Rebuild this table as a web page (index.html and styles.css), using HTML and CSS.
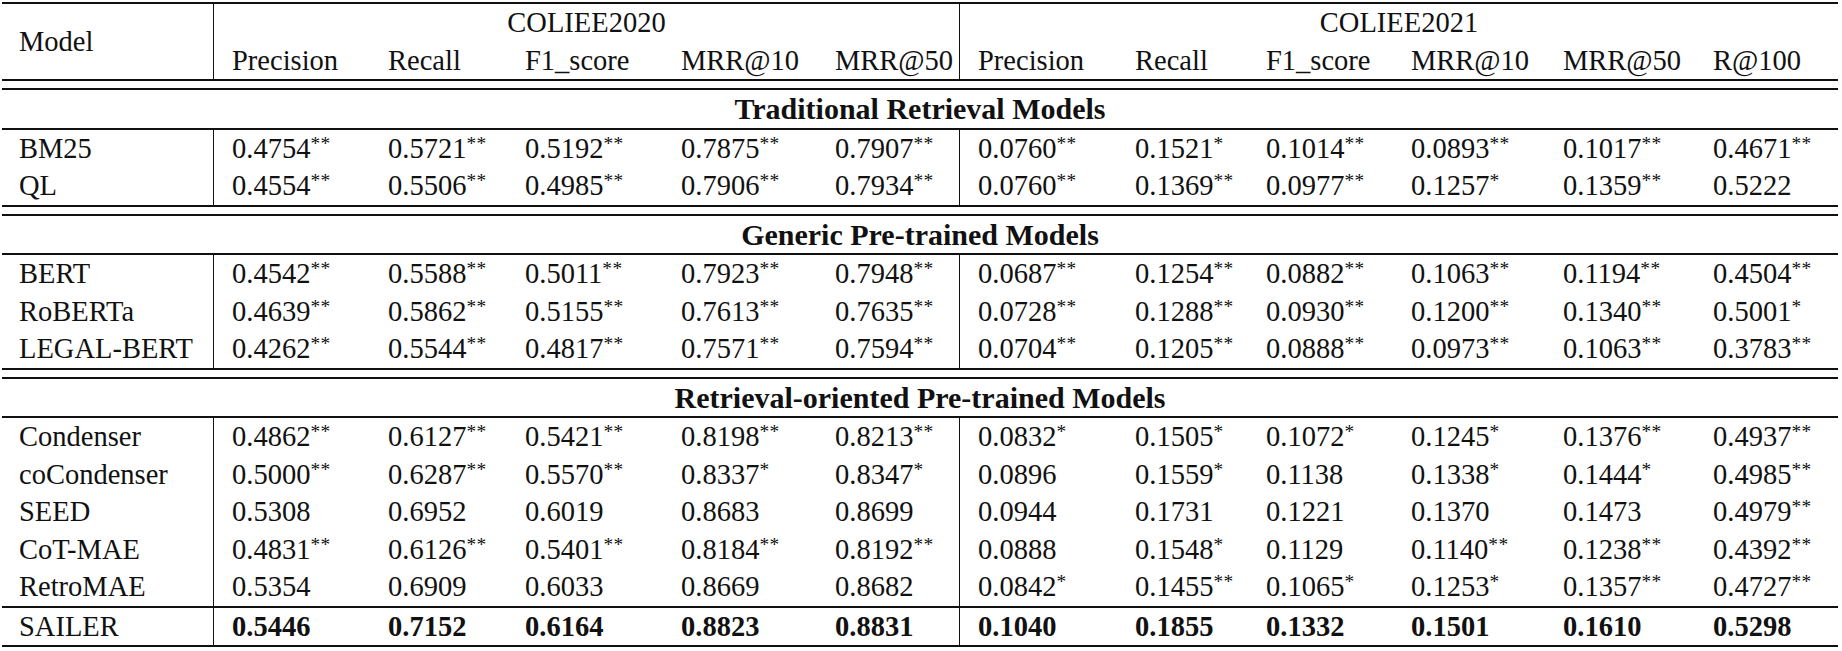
FILE: index.html
```html
<!DOCTYPE html>
<html>
<head>
<meta charset="utf-8">
<link rel="stylesheet" href="styles.css">
</head>
<body>
<div class="tbl">
  <div class="grid head">
    <div class="model span2">Model</div>
    <div class="grp g20">COLIEE2020</div>
    <div class="grp g21">COLIEE2021</div>
    <div class="h">Precision</div>
    <div class="h">Recall</div>
    <div class="h">F1_score</div>
    <div class="h">MRR@10</div>
    <div class="h">MRR@50</div>
    <div class="h v">Precision</div>
    <div class="h">Recall</div>
    <div class="h">F1_score</div>
    <div class="h">MRR@10</div>
    <div class="h">MRR@50</div>
    <div class="h">R@100</div>
  </div>

  <div class="sec first">Traditional Retrieval Models</div>
  <div class="grid body end">
    <div class="model">BM25</div><div>0.4754<sup>**</sup></div><div>0.5721<sup>**</sup></div><div>0.5192<sup>**</sup></div><div>0.7875<sup>**</sup></div><div>0.7907<sup>**</sup></div><div class="v">0.0760<sup>**</sup></div><div>0.1521<sup>*</sup></div><div>0.1014<sup>**</sup></div><div>0.0893<sup>**</sup></div><div>0.1017<sup>**</sup></div><div>0.4671<sup>**</sup></div>
    <div class="model">QL</div><div>0.4554<sup>**</sup></div><div>0.5506<sup>**</sup></div><div>0.4985<sup>**</sup></div><div>0.7906<sup>**</sup></div><div>0.7934<sup>**</sup></div><div class="v">0.0760<sup>**</sup></div><div>0.1369<sup>**</sup></div><div>0.0977<sup>**</sup></div><div>0.1257<sup>*</sup></div><div>0.1359<sup>**</sup></div><div>0.5222</div>
  </div>

  <div class="sec">Generic Pre-trained Models</div>
  <div class="grid body end">
    <div class="model">BERT</div><div>0.4542<sup>**</sup></div><div>0.5588<sup>**</sup></div><div>0.5011<sup>**</sup></div><div>0.7923<sup>**</sup></div><div>0.7948<sup>**</sup></div><div class="v">0.0687<sup>**</sup></div><div>0.1254<sup>**</sup></div><div>0.0882<sup>**</sup></div><div>0.1063<sup>**</sup></div><div>0.1194<sup>**</sup></div><div>0.4504<sup>**</sup></div>
    <div class="model">RoBERTa</div><div>0.4639<sup>**</sup></div><div>0.5862<sup>**</sup></div><div>0.5155<sup>**</sup></div><div>0.7613<sup>**</sup></div><div>0.7635<sup>**</sup></div><div class="v">0.0728<sup>**</sup></div><div>0.1288<sup>**</sup></div><div>0.0930<sup>**</sup></div><div>0.1200<sup>**</sup></div><div>0.1340<sup>**</sup></div><div>0.5001<sup>*</sup></div>
    <div class="model">LEGAL-BERT</div><div>0.4262<sup>**</sup></div><div>0.5544<sup>**</sup></div><div>0.4817<sup>**</sup></div><div>0.7571<sup>**</sup></div><div>0.7594<sup>**</sup></div><div class="v">0.0704<sup>**</sup></div><div>0.1205<sup>**</sup></div><div>0.0888<sup>**</sup></div><div>0.0973<sup>**</sup></div><div>0.1063<sup>**</sup></div><div>0.3783<sup>**</sup></div>
  </div>

  <div class="sec">Retrieval-oriented Pre-trained Models</div>
  <div class="grid body">
    <div class="model">Condenser</div><div>0.4862<sup>**</sup></div><div>0.6127<sup>**</sup></div><div>0.5421<sup>**</sup></div><div>0.8198<sup>**</sup></div><div>0.8213<sup>**</sup></div><div class="v">0.0832<sup>*</sup></div><div>0.1505<sup>*</sup></div><div>0.1072<sup>*</sup></div><div>0.1245<sup>*</sup></div><div>0.1376<sup>**</sup></div><div>0.4937<sup>**</sup></div>
    <div class="model">coCondenser</div><div>0.5000<sup>**</sup></div><div>0.6287<sup>**</sup></div><div>0.5570<sup>**</sup></div><div>0.8337<sup>*</sup></div><div>0.8347<sup>*</sup></div><div class="v">0.0896</div><div>0.1559<sup>*</sup></div><div>0.1138</div><div>0.1338<sup>*</sup></div><div>0.1444<sup>*</sup></div><div>0.4985<sup>**</sup></div>
    <div class="model">SEED</div><div>0.5308</div><div>0.6952</div><div>0.6019</div><div>0.8683</div><div>0.8699</div><div class="v">0.0944</div><div>0.1731</div><div>0.1221</div><div>0.1370</div><div>0.1473</div><div>0.4979<sup>**</sup></div>
    <div class="model">CoT-MAE</div><div>0.4831<sup>**</sup></div><div>0.6126<sup>**</sup></div><div>0.5401<sup>**</sup></div><div>0.8184<sup>**</sup></div><div>0.8192<sup>**</sup></div><div class="v">0.0888</div><div>0.1548<sup>*</sup></div><div>0.1129</div><div>0.1140<sup>**</sup></div><div>0.1238<sup>**</sup></div><div>0.4392<sup>**</sup></div>
    <div class="model">RetroMAE</div><div>0.5354</div><div>0.6909</div><div>0.6033</div><div>0.8669</div><div>0.8682</div><div class="v">0.0842<sup>*</sup></div><div>0.1455<sup>**</sup></div><div>0.1065<sup>*</sup></div><div>0.1253<sup>*</sup></div><div>0.1357<sup>**</sup></div><div>0.4727<sup>**</sup></div>
  </div>
  <div class="grid body best">
    <div class="model">SAILER</div><div class="b">0.5446</div><div class="b">0.7152</div><div class="b">0.6164</div><div class="b">0.8823</div><div class="b">0.8831</div><div class="b v">0.1040</div><div class="b">0.1855</div><div class="b">0.1332</div><div class="b">0.1501</div><div class="b">0.1610</div><div class="b">0.5298</div>
  </div>
</div>
</body>
</html>
```

FILE: styles.css
```css
html, body {
  margin: 0;
  padding: 0;
  background: #ffffff;
}
body {
  padding: 2px 4px 0 2px;
  font-family: "Liberation Serif", "DejaVu Serif", serif;
  font-size: 28.5px;
  color: #111;
}
.tbl {
  width: 1836px;
}
.grid {
  display: grid;
  grid-template-columns: 212px 156px 137px 156px 154px 142px 158px 131px 145px 152px 150px 143px;
  grid-auto-rows: 37.5px;
}
.grid > div {
  line-height: 37.5px;
  padding-left: 18px;
  white-space: nowrap;
}
.grid > .model {
  padding-left: 17px;
  border-right: 1.5px solid #111;
}
.grid > .v {
  border-left: 1.5px solid #111;
}
.head {
  border-top: 2px solid #111;
  border-bottom: 2px solid #111;
}
.head .span2 {
  grid-row: 1 / 3;
  display: flex;
  align-items: center;
}
.head .grp {
  text-align: center;
  padding-left: 0;
}
.head .g20 {
  grid-column: 2 / 7;
}
.head .g21 {
  grid-column: 7 / 13;
  border-left: 1.5px solid #111;
}
.sec {
  margin-top: 7px;
  border-top: 2px solid #111;
  border-bottom: 2px solid #111;
  height: 37.5px;
  line-height: 37.5px;
  text-align: center;
  font-weight: bold;
  font-size: 30px;
}
.body.end {
  border-bottom: 2px solid #111;
}
.best {
  border-top: 2px solid #111;
  border-bottom: 2px solid #111;
}
.b {
  font-weight: bold;
}
sup {
  font-size: 0.68em;
  line-height: 0;
  vertical-align: 0.4em;
  letter-spacing: 0.5px;
}
```
